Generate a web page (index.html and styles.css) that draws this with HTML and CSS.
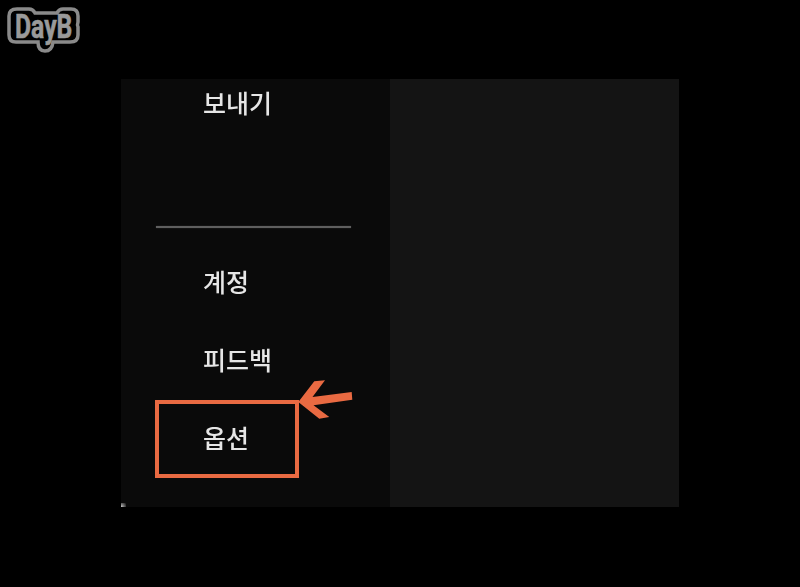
FILE: index.html
```html
<!DOCTYPE html>
<html lang="ko">
<head>
<meta charset="utf-8">
<title>옵션</title>
<link rel="stylesheet" href="styles.css">
</head>
<body>
<header class="brand">
  <svg class="logo" width="76" height="50" viewBox="0 0 76 50" aria-label="DayB">
    <path class="logo-shape" d="M10 2H22Q26 2 28 6H50Q52 2 56 2H64Q71 2 71 9V15Q70 18 71 20V28Q71 35 63 35H46Q45 44 38 44Q31 44 31 35H9Q2 35 2 28V9Q2 2 10 2Z"/>
    <text class="logo-text">DayB</text>
  </svg>
</header>
<main class="panel">
  <nav class="sidebar">
    <div class="row">보내기</div>
    <hr class="divider">
    <div class="row">계정</div>
    <div class="row">피드백</div>
    <div class="row">옵션</div>
    <span class="glint"></span>
    <span class="highlight"></span>
    <svg class="arrow" width="60" height="44" viewBox="0 0 60 44">
      <path d="M0.3 23L16.3 2.3L27 1.3L14.5 18L53.7 13L54.3 20.7L15.5 26.3L31.3 38L21.3 39.7Z"/>
    </svg>
  </nav>
  <section class="content"></section>
</main>
</body>
</html>
```
FILE: styles.css
```css
html, body {
  margin: 0;
  height: 587px;
  background: #000;
  overflow: hidden;
}

.brand {
  height: 79px;
  padding: 7px 0 0 7px;
  box-sizing: border-box;
}

.logo {
  display: block;
}

.logo-shape {
  fill: #000;
  stroke: #8a8a8a;
  stroke-width: 3.5;
}

.logo-text {
  font-family: "Roboto", "Liberation Sans", sans-serif;
  font-size: 33px;
  font-weight: 700;
  fill: #9a9a9a;
  stroke: #9a9a9a;
  stroke-width: 0.6;
  transform: translate(8px, 31px) scaleX(0.75);
}

.panel {
  display: flex;
  width: 558px;
  height: 428px;
  margin-left: 121px;
  overflow: hidden;
}

.sidebar {
  position: relative;
  display: flex;
  flex-direction: column;
  justify-content: flex-end;
  width: 269px;
  padding-bottom: 30px;
  box-sizing: border-box;
  background: #0a0a0a;
}

.content {
  flex: 1;
  background: #141414;
}

.row {
  flex: none;
  height: 78px;
  padding-left: 82px;
  font-family: "Noto Sans CJK KR", "Noto Sans", sans-serif;
  font-size: 25px;
  font-weight: 500;
  line-height: 77px;
  color: #e6e6e6;
  filter: blur(0.5px);
}

.divider {
  flex: none;
  width: 195px;
  height: 2px;
  margin: 84px 0 15px 35px;
  border: 0;
  background: #5f5f5f;
  box-shadow: 0 0 1px #5f5f5f;
}

.highlight {
  position: absolute;
  left: 34px;
  top: 321px;
  width: 144px;
  height: 78px;
  box-sizing: border-box;
  border: 4px solid #e96a42;
}

.arrow {
  position: absolute;
  left: 177px;
  top: 300px;
}

.arrow path {
  fill: #e96a42;
}

.glint {
  position: absolute;
  left: 0;
  bottom: 0;
  width: 5px;
  height: 4px;
  background: radial-gradient(circle at 0 100%, #cfcfcf 0, rgba(200,200,200,0) 100%);
}
```
